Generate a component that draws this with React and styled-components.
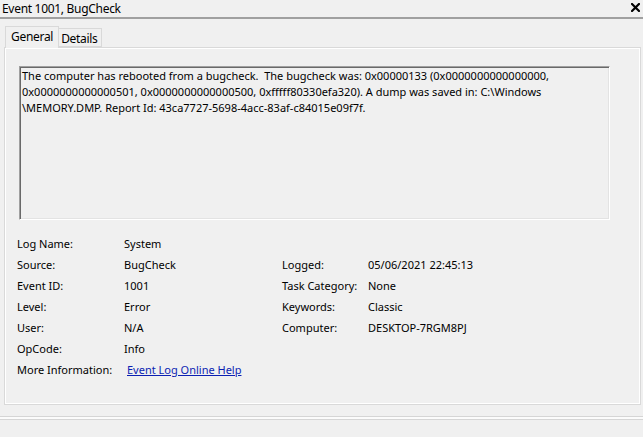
import React from 'react';
import styled, { createGlobalStyle } from 'styled-components';

const GlobalStyle = createGlobalStyle`
  html, body {
    margin: 0;
    padding: 0;
    background: #f0f0f0;
  }
  body {
    font-family: "Noto Sans", "Open Sans", "Liberation Sans", sans-serif;
    font-size: 11px;
    color: #000;
  }
`;

const fields = [
  ['Log Name:', 'System'],
  ['Source:', 'BugCheck', 'Logged:', '05/06/2021 22:45:13'],
  ['Event ID:', '1001', 'Task Category:', 'None'],
  ['Level:', 'Error', 'Keywords:', 'Classic'],
  ['User:', 'N/A', 'Computer:', 'DESKTOP-7RGM8PJ'],
  ['OpCode:', 'Info'],
];

const message = [
  'The computer has rebooted from a bugcheck.  The bugcheck was: 0x00000133 (0x0000000000000000,',
  '0x0000000000000501, 0x0000000000000500, 0xfffff80330efa320). A dump was saved in: C:\\Windows',
  '\\MEMORY.DMP. Report Id: 43ca7727-5698-4acc-83af-c84015e09f7f.',
];

const App = () => {
  return (
    <>
      <GlobalStyle />
      <Window>
        <TitleBar>
          <Title>Event 1001, BugCheck</Title>
          <CloseButton aria-label="Close">
            <svg width="9" height="9" viewBox="0 0 9 9">
              <path d="M1 1 L8 8 M8 1 L1 8" stroke="#000" strokeWidth="2.2" strokeLinecap="square" />
            </svg>
          </CloseButton>
        </TitleBar>

        <Body>
          <TabStrip>
            <Tab $active>General</Tab>
            <Tab>Details</Tab>
          </TabStrip>

          <Panel>
            <MessageBox>
              {message.map(line => (
                <MessageLine key={line}>{line}</MessageLine>
              ))}
            </MessageBox>

            <Fields>
              {fields.map(([label, value, label2, value2]) => (
                <React.Fragment key={label}>
                  <Label>{label}</Label>
                  <Value>{value}</Value>
                  <Label>{label2 || ''}</Label>
                  <Value>{value2 || ''}</Value>
                </React.Fragment>
              ))}
              <Label>More Information:</Label>
              <Value>
                <HelpLink href="#">Event Log Online Help</HelpLink>
              </Value>
              <Label />
              <Value />
            </Fields>
          </Panel>

          <Separator />
        </Body>
      </Window>
    </>
  );
};

export default App;

const Window = styled.div`
  width: 643px;
  height: 437px;
  background: #f0f0f0;
  overflow: hidden;
`;

const TitleBar = styled.div`
  display: flex;
  align-items: center;
  justify-content: space-between;
  height: 17px;
  padding: 0 3px 0 2px;
  border-bottom: 2px solid #a0a0a0;
`;

const Title = styled.div`
  font-size: 12px;
  letter-spacing: -0.3px;
  line-height: 17px;
  white-space: nowrap;
`;

const CloseButton = styled.div`
  display: flex;
  align-items: center;
  margin-top: -2px;
`;

const Body = styled.div`
  padding: 7px 2px 0 4px;
`;

const TabStrip = styled.div`
  display: flex;
  align-items: flex-end;
  height: 21px;
  padding-left: 1px;
  position: relative;
  z-index: 1;
`;

const Tab = styled.div`
  box-sizing: border-box;
  height: ${p => (p.$active ? '22px' : '19px')};
  padding: ${p => (p.$active ? '2px 5px 0 5px' : '2px 3px 0 2px')};
  margin-bottom: ${p => (p.$active ? '-1px' : '0')};
  background: #f0f0f0;
  border: 1px solid #d9d9d9;
  border-bottom: ${p => (p.$active ? 'none' : '1px solid #d9d9d9')};
  border-left: ${p => (p.$active ? '1px solid #d9d9d9' : 'none')};
  font-size: 12px;
  letter-spacing: -0.3px;
  line-height: 16px;
  white-space: nowrap;
`;

const Panel = styled.div`
  box-sizing: border-box;
  height: 358px;
  border: 1px solid #d9d9d9;
  box-shadow: inset -1px -1px 0 #ffffff, inset 1px 1px 0 #ffffff;
  padding: 18px 0 0 14px;
`;

const MessageBox = styled.div`
  box-sizing: border-box;
  width: 591px;
  height: 154px;
  border: 1px solid;
  border-color: #a0a0a0 #ffffff #ffffff #a0a0a0;
  box-shadow: inset 1px 1px 0 #696969, inset -1px -1px 0 #e3e3e3;
  padding: 1px 2px 0 2px;
  background: #f0f0f0;
`;

const MessageLine = styled.div`
  line-height: 16px;
  white-space: pre;
`;

const Fields = styled.div`
  display: grid;
  grid-template-columns: 107px 158px 86px 1fr;
  grid-auto-rows: 21px;
  margin: 13px 0 0 -2px;
  align-items: center;
`;

const Label = styled.div`
  white-space: nowrap;
`;

const Value = styled.div`
  white-space: nowrap;
`;

const HelpLink = styled.a`
  margin-left: 3px;
  color: #0b1fb3;
  text-decoration: underline;
`;

const Separator = styled.div`
  margin-top: 11px;
  margin-left: -4px;
  margin-right: -2px;
  height: 2px;
  border-top: 1px solid #d5d5d5;
  border-bottom: 1px solid #d5d5d5;
  background: #fbfbfb;
`;
